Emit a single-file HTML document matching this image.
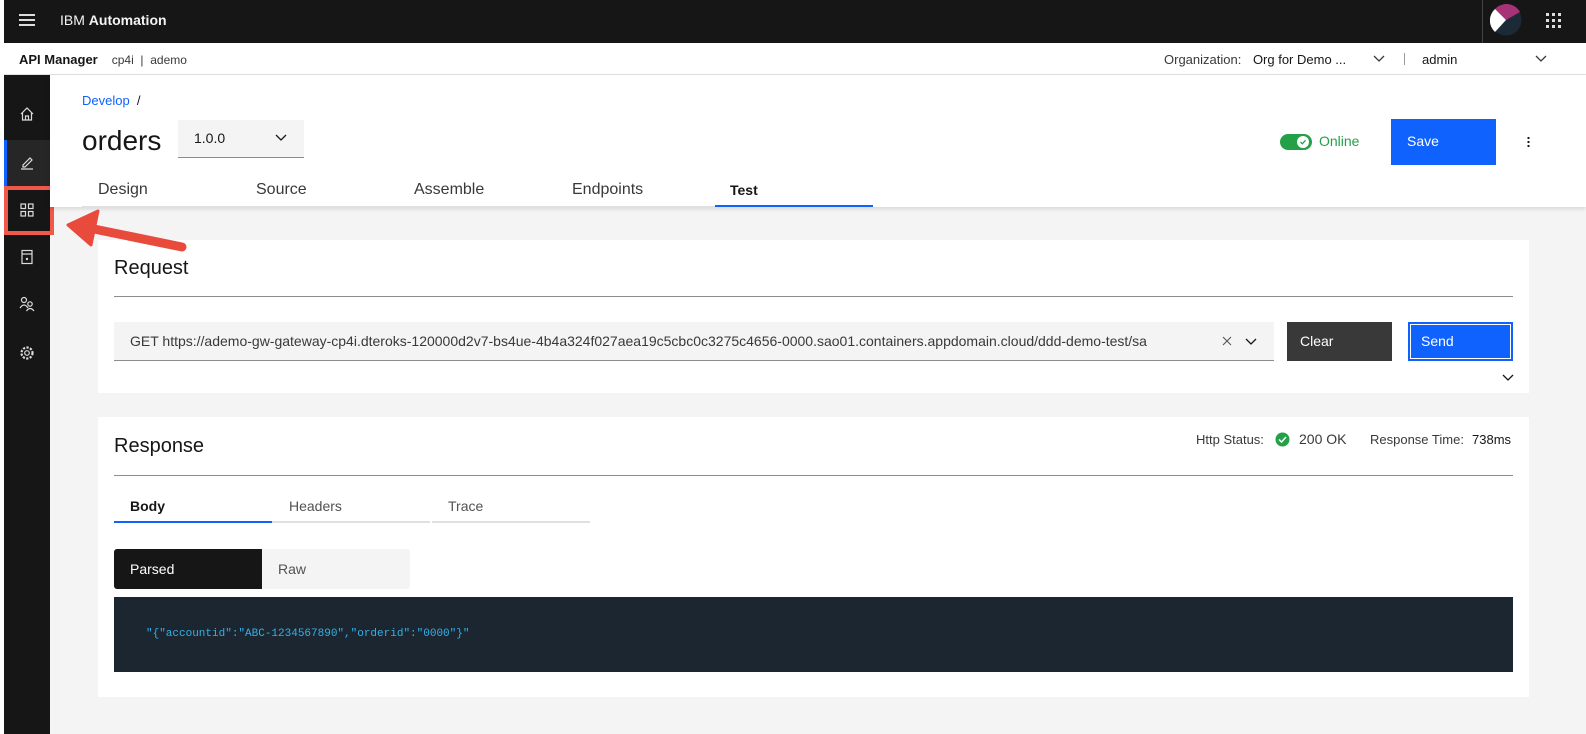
<!DOCTYPE html>
<html><head><meta charset="utf-8"><style>
*{box-sizing:border-box;margin:0;padding:0}
body{width:1586px;height:734px;overflow:hidden;background:#f4f4f4;font-family:"Liberation Sans",sans-serif;color:#161616;position:relative}
.a{position:absolute}
</style></head><body>
<div class="a" style="left:0;top:0;width:4px;height:734px;background:#fff"></div>
<div class="a" style="left:4px;top:0;right:0;height:43px;background:#161616"></div>
<div class="a" style="left:19px;top:14px;width:16px;height:12px;border-top:2px solid #ddd;border-bottom:2px solid #ddd"></div>
<div class="a" style="left:19px;top:19px;width:16px;height:2px;background:#ddd"></div>
<div class="a" style="left:60px;top:12px;color:#f4f4f4;font-size:14px">IBM <b>Automation</b></div>
<div class="a" style="left:1482px;top:0;width:1px;height:43px;background:#444"></div>
<svg class="a" style="left:1490px;top:4px" width="32" height="32" viewBox="0 0 32 32"><circle cx="16" cy="16" r="15.5" fill="#1b2a36"/><path d="M16 16 L5 5 A15.5 15.5 0 0 1 30 8 Z" fill="#a83277"/><path d="M16 16 L5 5 A15.5 15.5 0 0 0 5 28 Z" fill="#fff"/></svg>
<svg class="a" style="left:1545px;top:12px" width="18" height="18"><g fill="#ddd"><rect x="1" y="1" width="3" height="3"/><rect x="7" y="1" width="3" height="3"/><rect x="13" y="1" width="3" height="3"/><rect x="1" y="7" width="3" height="3"/><rect x="7" y="7" width="3" height="3"/><rect x="13" y="7" width="3" height="3"/><rect x="1" y="13" width="3" height="3"/><rect x="7" y="13" width="3" height="3"/><rect x="13" y="13" width="3" height="3"/></g></svg>
<div class="a" style="left:4px;top:43px;right:0;height:32px;background:#fff;border-bottom:1px solid #e0e0e0"></div>
<div class="a" style="left:19px;top:52px;font-size:13px"><b>API Manager</b><span style="font-size:12px;color:#393939;margin-left:14px">cp4i &nbsp;| &nbsp;ademo</span></div>
<div class="a" style="left:1164px;top:52px;font-size:13px;color:#393939">Organization: <span style="color:#161616;margin-left:8px">Org for Demo ...</span></div>
<svg class="a" style="left:1373px;top:55px" width="12" height="8"><path d="M1 1 L6 6 L11 1" stroke="#393939" fill="none" stroke-width="1.3"/></svg>
<div class="a" style="left:1404px;top:53px;width:1px;height:12px;background:#999"></div>
<div class="a" style="left:1422px;top:52px;font-size:13px">admin</div>
<svg class="a" style="left:1535px;top:55px" width="12" height="8"><path d="M1 1 L6 6 L11 1" stroke="#393939" fill="none" stroke-width="1.3"/></svg>
<div class="a" style="left:4px;top:75px;width:46px;height:659px;background:#161616"></div>
<div class="a" style="left:4px;top:140px;width:46px;height:46px;background:#262626;border-left:3px solid #0f62fe"></div>
<svg class="a" style="left:19px;top:106px" width="16" height="16" fill="none" stroke="#ddd" stroke-width="1.2"><path d="M2 8 L8 2 L14 8 M3.5 6.5 V14 H12.5 V6.5 M6.5 14 V10 H9.5 V14"/></svg>
<svg class="a" style="left:19px;top:154px" width="16" height="16" fill="none" stroke="#ddd" stroke-width="1.2"><path d="M2 15 H14 M4 11 L11 4 L13 6 L6 13 H4 Z"/></svg>
<div class="a" style="left:4px;top:186px;width:50px;height:49px;border:4px solid #f0584a;background:#161616"></div>
<svg class="a" style="left:19px;top:202px" width="16" height="16" fill="none" stroke="#ddd" stroke-width="1.2"><rect x="2" y="2" width="4.5" height="4.5"/><rect x="9.5" y="2" width="4.5" height="4.5"/><rect x="2" y="9.5" width="4.5" height="4.5"/><rect x="9.5" y="9.5" width="4.5" height="4.5"/></svg>
<svg class="a" style="left:19px;top:249px" width="16" height="16" fill="none" stroke="#ddd" stroke-width="1.2"><rect x="3" y="1.5" width="10" height="13"/><path d="M3 5 H13"/><circle cx="8" cy="10" r=".6" fill="#ddd"/></svg>
<svg class="a" style="left:19px;top:296px" width="16" height="16" fill="none" stroke="#ddd" stroke-width="1.2"><circle cx="5" cy="4" r="2.5"/><path d="M1 12 Q5 6 9 12"/><circle cx="11" cy="8" r="2.2"/><path d="M7.5 15 Q11 10 15 15"/></svg>
<svg class="a" style="left:19px;top:345px" width="16" height="16" fill="none" stroke="#ddd" stroke-width="1.2"><circle cx="8" cy="8" r="2.3"/><circle cx="8" cy="8" r="5.5" stroke-dasharray="2.2 1.4" stroke-width="2.2"/></svg>
<div class="a" style="left:50px;top:75px;right:0;height:132px;background:#fff;box-shadow:0 2px 4px rgba(0,0,0,.12)"></div>
<div class="a" style="left:82px;top:93px;font-size:13px"><span style="color:#0f62fe">Develop</span> &nbsp;/</div>
<div class="a" style="left:82px;top:125px;font-size:28px">orders</div>
<div class="a" style="left:178px;top:120px;width:126px;height:38px;background:#f4f4f4;border-bottom:1px solid #8d8d8d;font-size:14px;padding:10px 16px">1.0.0</div>
<svg class="a" style="left:275px;top:134px" width="12" height="8"><path d="M1 1 L6 6 L11 1" stroke="#161616" fill="none" stroke-width="1.3"/></svg>
<div class="a" style="left:1280px;top:134px;width:32px;height:16px;border-radius:8px;background:#24a148"></div>
<div class="a" style="left:1297px;top:136px;width:12px;height:12px;border-radius:6px;background:#fff"></div>
<svg class="a" style="left:1299px;top:138px" width="8" height="8"><path d="M1.5 4 L3.3 5.8 L6.5 2.3" stroke="#24a148" fill="none" stroke-width="1.3"/></svg>
<div class="a" style="left:1319px;top:133px;font-size:14px;color:#24a148">Online</div>
<div class="a" style="left:1391px;top:119px;width:105px;height:46px;background:#0f62fe;color:#fff;font-size:14px;padding:14px 16px">Save</div>
<div class="a" style="left:1527px;top:136px;width:3px;height:12px;background:radial-gradient(circle,#161616 1px,transparent 1.3px) 0 0/3px 4px"></div>
<div class="a" style="left:82px;top:206px;width:791px;height:2px;background:#e0e0e0"></div>
<div class="a" style="left:715px;top:205px;width:158px;height:2px;background:#0f62fe"></div>
<div class="a" style="left:98px;top:181px;font-size:16px;color:#393939">Design</div>
<div class="a" style="left:256px;top:181px;font-size:16px;color:#393939">Source</div>
<div class="a" style="left:414px;top:181px;font-size:16px;color:#393939">Assemble</div>
<div class="a" style="left:572px;top:181px;font-size:16px;color:#393939">Endpoints</div>
<div class="a" style="left:730px;top:182px;font-size:14px;font-weight:bold">Test</div>
<div class="a" style="left:98px;top:240px;width:1431px;height:153px;background:#fff"></div>
<div class="a" style="left:114px;top:257px;font-size:20px">Request</div>
<div class="a" style="left:114px;top:296px;width:1399px;height:1px;background:#8d8d8d"></div>
<div class="a" style="left:114px;top:322px;width:1160px;height:39px;background:#f4f4f4;border-bottom:1px solid #8d8d8d;font-size:14px;color:#393939;padding:11px 16px;white-space:nowrap;overflow:hidden">GET https://ademo-gw-gateway-cp4i.dteroks-120000d2v7-bs4ue-4b4a324f027aea19c5cbc0c3275c4656-0000.sao01.containers.appdomain.cloud/ddd-demo-test/sa</div>
<div class="a" style="left:1204px;top:322px;width:70px;height:38px;background:#f4f4f4"></div>
<svg class="a" style="left:1222px;top:336px" width="10" height="10"><path d="M1 1 L9 9 M9 1 L1 9" stroke="#555" stroke-width="1.1"/></svg>
<svg class="a" style="left:1245px;top:338px" width="12" height="8"><path d="M1 1 L6 6 L11 1" stroke="#161616" fill="none" stroke-width="1.3"/></svg>
<div class="a" style="left:1287px;top:322px;width:105px;height:39px;background:#393939;color:#fff;font-size:14px;padding:11px 13px">Clear</div>
<div class="a" style="left:1408px;top:322px;width:105px;height:39px;background:#0f62fe;border:2px solid #0f62fe;box-shadow:inset 0 0 0 1px #fff;color:#fff;font-size:14px;padding:9px 11px">Send</div>
<svg class="a" style="left:1502px;top:374px" width="12" height="8"><path d="M1 1 L6 6 L11 1" stroke="#161616" fill="none" stroke-width="1.3"/></svg>
<div class="a" style="left:98px;top:417px;width:1431px;height:280px;background:#fff"></div>
<div class="a" style="left:114px;top:435px;font-size:20px">Response</div>
<div class="a" style="left:1196px;top:432px;font-size:13px;color:#393939">Http Status:</div>
<svg class="a" style="left:1275px;top:432px" width="15" height="15"><circle cx="7.5" cy="7.5" r="7" fill="#24a148"/><path d="M4 7.5 L6.5 10 L11 5" stroke="#fff" fill="none" stroke-width="1.5"/></svg>
<div class="a" style="left:1299px;top:431px;font-size:14px;color:#393939">200 OK</div>
<div class="a" style="left:1370px;top:432px;font-size:13px;color:#393939">Response Time:</div>
<div class="a" style="left:1472px;top:432px;font-size:13px">738ms</div>
<div class="a" style="left:114px;top:475px;width:1399px;height:1px;background:#8d8d8d"></div>
<div class="a" style="left:130px;top:498px;font-size:14px;font-weight:bold">Body</div>
<div class="a" style="left:289px;top:498px;font-size:14px;color:#525252">Headers</div>
<div class="a" style="left:448px;top:498px;font-size:14px;color:#525252">Trace</div>
<div class="a" style="left:114px;top:521px;width:158px;height:2px;background:#0f62fe"></div>
<div class="a" style="left:272px;top:521px;width:158px;height:2px;background:#e0e0e0"></div>
<div class="a" style="left:432px;top:521px;width:158px;height:2px;background:#e0e0e0"></div>
<div class="a" style="left:114px;top:549px;width:296px;height:40px;background:#f4f4f4;border-radius:3px"></div>
<div class="a" style="left:114px;top:549px;width:148px;height:40px;background:#161616;border-radius:3px 0 0 3px;color:#fff;font-size:14px;padding:12px 16px">Parsed</div>
<div class="a" style="left:278px;top:561px;font-size:14px;color:#525252">Raw</div>
<div class="a" style="left:114px;top:597px;width:1399px;height:75px;background:#1b2630"></div>
<div class="a" style="left:146px;top:628px;font-family:'Liberation Mono',monospace;font-size:11px;color:#33b1e8">"{"accountid":"ABC-1234567890","orderid":"0000"}"</div>
<svg class="a" style="left:60px;top:205px;overflow:visible;z-index:5" width="140" height="60"><path d="M122 42 L34 24" stroke="#e84b3c" stroke-width="9" stroke-linecap="round"/><path d="M8 20 L38 6 L31 40 Z" fill="#e84b3c" stroke="#e84b3c" stroke-width="3" stroke-linejoin="round"/></svg>
</body></html>
